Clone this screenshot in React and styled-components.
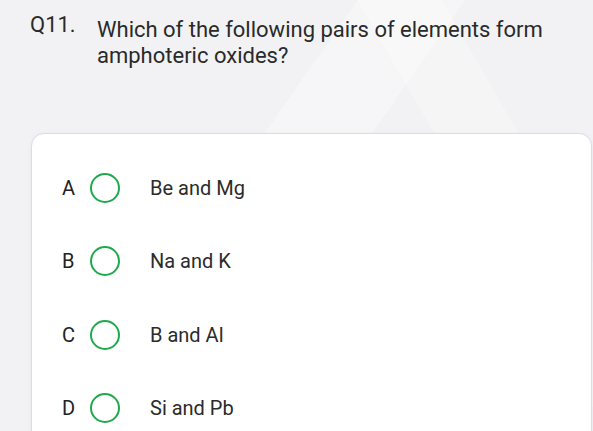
import React from 'react'
import styled, { createGlobalStyle } from 'styled-components'

const GlobalStyle = createGlobalStyle`
  html, body {
    margin: 0;
    padding: 0;
  }
  body {
    width: 593px;
    height: 431px;
    overflow: hidden;
    font-family: Roboto, 'Liberation Sans', sans-serif;
  }
`;

const Page = styled.div`
  width: 593px;
  height: 431px;
  overflow: hidden;
  background:
    linear-gradient(125deg, transparent 0 40%, rgba(255,255,255,0.3) 40% 52%, transparent 52%),
    linear-gradient(60deg, transparent 0 72%, rgba(255,255,255,0.25) 72% 82%, transparent 82%),
    #f2f2f4;
`;

const Question = styled.div`
  display: flex;
  align-items: flex-start;
  padding: 17px 20px 0 30px;
  height: 133px;
  box-sizing: border-box;
`;

const Number = styled.span`
  font-size: 22px;
  line-height: 26px;
  color: #2a2a2a;
  width: 67px;
  flex-shrink: 0;
  margin-top: -5px;
`;

const Prompt = styled.p`
  margin: 0;
  font-size: 22px;
  line-height: 26px;
  color: #2a2a2a;
`;

const Card = styled.div`
  margin: 0 1px 0 31px;
  background: #ffffff;
  border: 1px solid #dddaea;
  border-radius: 13px;
  padding: 17px 0 0 30px;
  height: 340px;
  box-shadow: 0 1px 4px rgba(120, 110, 160, 0.08);
`;

const Option = styled.div`
  display: flex;
  align-items: center;
  height: 73.5px;
`;

const Letter = styled.span`
  width: 28px;
  font-size: 20px;
  color: #222;
`;

const Radio = styled.span`
  width: 26px;
  height: 26px;
  border: 2px solid #1fa94d;
  border-radius: 50%;
  flex-shrink: 0;
`;

const Label = styled.span`
  margin-left: 30px;
  font-size: 20px;
  color: #2b2b2b;
`;

const options = [
  ['A', 'Be and Mg'],
  ['B', 'Na and K'],
  ['C', 'B and Al'],
  ['D', 'Si and Pb'],
];

export default function App() {
  return (
    <Page>
      <GlobalStyle />
      <Question>
        <Number>Q11.</Number>
        <Prompt>
          Which of the following pairs of elements form
          <br />
          amphoteric oxides?
        </Prompt>
      </Question>
      <Card>
        {options.map(([letter, text]) => (
          <Option key={letter}>
            <Letter>{letter}</Letter>
            <Radio />
            <Label>{text}</Label>
          </Option>
        ))}
      </Card>
    </Page>
  );
}
